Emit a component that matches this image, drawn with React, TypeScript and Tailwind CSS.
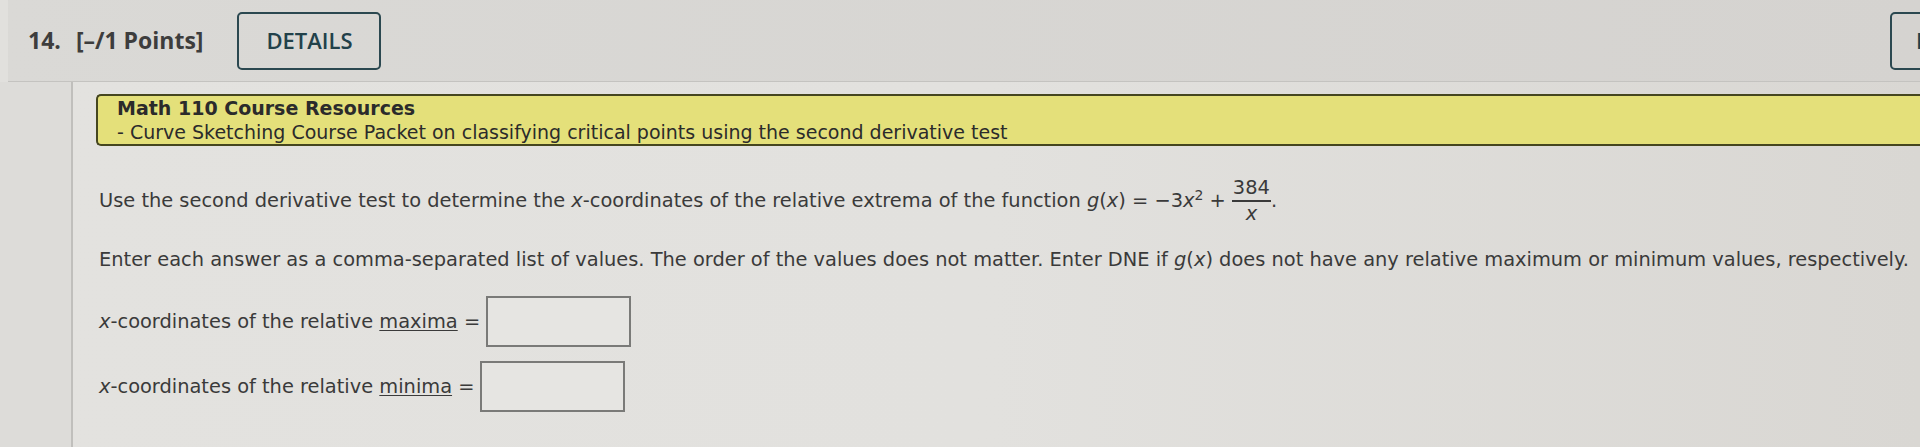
import React from "react";

const AnswerRow = ({ word, boxOffset }: { word: string; boxOffset: string }) => (
  <div className="flex items-center">
    <span>
      <i>x</i>-coordinates of the relative <span className="underline underline-offset-2">{word}</span> =
    </span>
    <div className={`${boxOffset} h-[51px] w-[145px] border-2 border-[#7a7a78] bg-[#e6e5e2]`} />
  </div>
);

export default function App() {
  return (
    <div className="w-[1920px] h-[447px] overflow-hidden bg-[#e1e0dd] text-[#3a3a3a] font-['DejaVu_Sans',sans-serif]">
      {/* question header */}
      <div className="ml-2 h-[82px] bg-linear-to-r from-[#dad9d6] to-[#d5d3d0] border-b border-[#c4c3c0] flex items-center pl-[20px] font-['Open_Sans',sans-serif]">
        <span className="text-[23px] font-bold text-[#3d3d3d]">14.</span>
        <span className="ml-[15px] text-[23px] font-bold text-[#3d3d3d]">[–/1 Points]</span>
        <button className="ml-[34px] h-[58px] w-[144px] rounded-[5px] border-2 border-[#2b4850] text-[22px] font-semibold text-[#22414a]">
          DETAILS
        </button>
        <div className="flex-1" />
        <button className="-mr-[90px] h-[58px] w-[120px] shrink-0 rounded-[5px] border-2 border-[#2b4850] pl-[24px] text-left text-[22px] font-semibold text-[#22414a]">
          NEXT
        </button>
      </div>

      <div className="flex h-[365px]">
        <div className="w-[73px] shrink-0 border-r-2 border-[#c0bfbc] bg-[#dddcd9]" />
        <div className="flex-1 pl-[23px] pt-[12px] bg-linear-to-r from-[#e3e2df] via-[#e2e1de] to-[#d9d7d3]">
          {/* resources box */}
          <div className="h-[52px] rounded-l-[5px] border-2 border-r-0 border-[#45461f] bg-[#e4e07a] pl-[19px] text-[19px] leading-[24px] text-[#2b2b2b]">
            <div className="font-bold">Math 110 Course Resources</div>
            <div>- Curve Sketching Course Packet on classifying critical points using the second derivative test</div>
          </div>

          <div className="pl-[3px] text-[19.4px] whitespace-nowrap">
            <div className="mt-[30px] flex items-center leading-[26px]">
              <span>
                Use the second derivative test to determine the <i>x</i>-coordinates of the relative extrema of the function{" "}
                <i>g</i>(<i>x</i>) = −3<i>x</i>
                <sup className="text-[14px]">2</sup> +{" "}
              </span>
              <span className="ml-[6px] inline-flex flex-col items-center leading-[24px]">
                <span className="border-b-2 border-[#3a3a3a] px-[1px]">384</span>
                <i>x</i>
              </span>
              <span>.</span>
            </div>

            <div className="mt-[19px]">
              Enter each answer as a comma-separated list of values. The order of the values does not matter. Enter DNE if{" "}
              <i>g</i>(<i>x</i>) does not have any relative maximum or minimum values, respectively.
            </div>

            <div className="mt-[22px]">
              <AnswerRow word="maxima" boxOffset="ml-[6px]" />
            </div>
            <div className="mt-[14px]">
              <AnswerRow word="minima" boxOffset="ml-[6px]" />
            </div>
          </div>
        </div>
      </div>
    </div>
  );
}
